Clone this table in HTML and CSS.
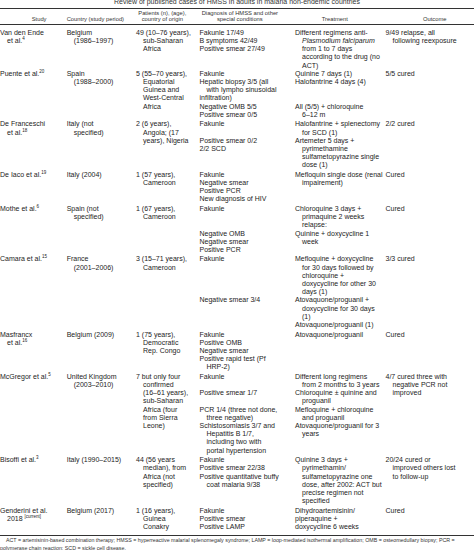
FILE: index.html
```html
<!DOCTYPE html>
<html>
<head>
<meta charset="utf-8">
<link rel="stylesheet" href="styles.css">
</head>
<body>
<div class="page">
  <div class="title">Review of published cases of HMSS in adults in malaria non-endemic countries</div>
  <div class="rule"></div>
  <div class="grid head">
    <div class="h h-study">Study</div>
    <div class="h h-country">Country (study period)</div>
    <div class="h h-pat"><span class="hc">Patients (n), (age),<br>country of origin</span></div>
    <div class="h h-diag"><span class="hc">Diagnosis of HMSS and other<br>special conditions</span></div>
    <div class="h h-treat">Treatment</div>
    <div class="h h-out">Outcome</div>
  </div>
  <div class="rule"></div>

  <div class="grid row first">
    <div class="c"><div class="it">Van den Ende<br>et al.<sup>4</sup></div></div>
    <div class="c"><div class="it">Belgium<br>(1986–1997)</div></div>
    <div class="c"><div class="it">49 (10–76 years),<br>sub-Saharan<br>Africa</div></div>
    <div class="c"><div class="it">Fakunle 17/49</div><div class="it">B symptoms 42/49</div><div class="it">Positive smear 27/49</div></div>
    <div class="c"><div class="it">Different regimens anti-<br><i>Plasmodium falciparum</i><br>from 1 to 7 days<br>according to the drug (no<br>ACT)</div></div>
    <div class="c"><div class="it">9/49 relapse, all<br>following reexposure</div></div>
  </div>

  <div class="grid row">
    <div class="c"><div class="it">Puente et al.<sup>20</sup></div></div>
    <div class="c"><div class="it">Spain<br>(1988–2000)</div></div>
    <div class="c"><div class="it">5 (55–70 years),<br>Equatorial<br>Guinea and<br>West-Central<br>Africa</div></div>
    <div class="c"><div class="it">Fakunle</div><div class="it">Hepatic biopsy 3/5 (all<br>with lympho sinusoidal</div><div class="it">infiltration)</div><div class="it">Negative OMB 5/5</div><div class="it">Positive smear 0/5</div></div>
    <div class="c"><div class="it">Quinine 7 days (1)</div><div class="it">Halofantrine 4 days (4)</div><div class="sp"></div><div class="sp"></div><div class="it">All (5/5) + chloroquine<br>6–12 m</div></div>
    <div class="c"><div class="it">5/5 cured</div></div>
  </div>

  <div class="grid row">
    <div class="c"><div class="it">De Franceschi<br>et al.<sup>18</sup></div></div>
    <div class="c"><div class="it">Italy (not<br>specified)</div></div>
    <div class="c"><div class="it">2 (6 years),<br>Angola; (17<br>years), Nigeria</div></div>
    <div class="c"><div class="it">Fakunle</div><div class="sp"></div><div class="it">Positive smear 0/2</div><div class="it">2/2 SCD</div></div>
    <div class="c"><div class="it">Halofantrine + splenectomy<br>for SCD (1)</div><div class="it">Artemeter 5 days +<br>pyrimethamine<br>sulfametopyrazine single<br>dose (1)</div></div>
    <div class="c"><div class="it">2/2 cured</div></div>
  </div>

  <div class="grid row">
    <div class="c"><div class="it">De Iaco et al.<sup>19</sup></div></div>
    <div class="c"><div class="it">Italy (2004)</div></div>
    <div class="c"><div class="it">1 (57 years),<br>Cameroon</div></div>
    <div class="c"><div class="it">Fakunle</div><div class="it">Negative smear</div><div class="it">Positive PCR</div><div class="it">New diagnosis of HIV</div></div>
    <div class="c"><div class="it">Mefloquin single dose (renal<br>impairement)</div></div>
    <div class="c"><div class="it">Cured</div></div>
  </div>

  <div class="grid row">
    <div class="c"><div class="it">Mothe et al.<sup>6</sup></div></div>
    <div class="c"><div class="it">Spain (not<br>specified)</div></div>
    <div class="c"><div class="it">1 (67 years),<br>Cameroon</div></div>
    <div class="c"><div class="it">Fakunle</div><div class="sp"></div><div class="sp"></div><div class="it">Negative OMB</div><div class="it">Negative smear</div><div class="it">Positive PCR</div></div>
    <div class="c"><div class="it">Chloroquine 3 days +<br>primaquine 2 weeks<br>relapse:</div><div class="it">Quinine + doxycycline 1<br>week</div></div>
    <div class="c"><div class="it">Cured</div></div>
  </div>

  <div class="grid row">
    <div class="c"><div class="it">Camara et al.<sup>15</sup></div></div>
    <div class="c"><div class="it">France<br>(2001–2006)</div></div>
    <div class="c"><div class="it">3 (15–71 years),<br>Cameroon</div></div>
    <div class="c"><div class="it">Fakunle</div><div class="sp"></div><div class="sp"></div><div class="sp"></div><div class="sp"></div><div class="it">Negative smear 3/4</div></div>
    <div class="c"><div class="it">Mefloquine + doxycycline<br>for 30 days followed by<br>chloroquine +<br>doxycycline for other 30<br>days (1)</div><div class="it">Atovaquone/proguanil +<br>doxycycline for 30 days<br>(1)</div><div class="it">Atovaquone/proguanil (1)</div></div>
    <div class="c"><div class="it">3/3 cured</div></div>
  </div>

  <div class="grid row">
    <div class="c"><div class="it">Masfrancx<br>et al.<sup>16</sup></div></div>
    <div class="c"><div class="it">Belgium (2009)</div></div>
    <div class="c"><div class="it">1 (75 years),<br>Democratic<br>Rep. Congo</div></div>
    <div class="c"><div class="it">Fakunle</div><div class="it">Positive OMB</div><div class="it">Negative smear</div><div class="it">Positive rapid test (Pf<br>HRP-2)</div></div>
    <div class="c"><div class="it">Atovaquone/proguanil</div></div>
    <div class="c"><div class="it">Cured</div></div>
  </div>

  <div class="grid row">
    <div class="c"><div class="it">McGregor et al.<sup>5</sup></div></div>
    <div class="c"><div class="it">United Kingdom<br>(2003–2010)</div></div>
    <div class="c"><div class="it">7 but only four<br>confirmed<br>(16–61 years),<br>sub-Saharan<br>Africa (four<br>from Sierra<br>Leone)</div></div>
    <div class="c"><div class="it">Fakunle</div><div class="sp"></div><div class="it">Positive smear 1/7</div><div class="sp"></div><div class="it">PCR 1/4 (three not done,<br>three negative)</div><div class="it">Schistosomiasis 3/7 and<br>Hepatitis B 1/7,<br>including two with<br>portal hypertension</div></div>
    <div class="c"><div class="it">Different long regimens<br>from 2 months to 3 years</div><div class="it">Chloroquine ± quinine and<br>proguanil</div><div class="it">Mefloquine + chloroquine<br>and proguanil</div><div class="it">Atovaquone/proguanil for 3<br>years</div></div>
    <div class="c"><div class="it">4/7 cured three with<br>negative PCR not<br>improved</div></div>
  </div>

  <div class="grid row">
    <div class="c"><div class="it">Bisoffi et al.<sup>3</sup></div></div>
    <div class="c"><div class="it">Italy (1990–2015)</div></div>
    <div class="c"><div class="it">44 (56 years<br>median), from<br>Africa (not<br>specified)</div></div>
    <div class="c"><div class="it">Fakunle</div><div class="it">Positive smear 22/38</div><div class="it">Positive quantitative buffy<br>coat malaria 9/38</div></div>
    <div class="c"><div class="it">Quinine 3 days +<br>pyrimethamin/<br>sulfametopyrazine one<br>dose, after 2002: ACT but<br>precise regimen not<br>specified</div></div>
    <div class="c"><div class="it">20/24 cured or<br>improved others lost<br>to follow-up</div></div>
  </div>

  <div class="grid row">
    <div class="c"><div class="it">Genderini et al.<br>2018 <sup>[current]</sup></div></div>
    <div class="c"><div class="it">Belgium (2017)</div></div>
    <div class="c"><div class="it">1 (16 years),<br>Guinea<br>Conakry</div></div>
    <div class="c"><div class="it">Fakunle</div><div class="it">Positive smear</div><div class="it">Positive LAMP</div></div>
    <div class="c"><div class="it">Dihydroartemisinin/</div><div class="it">piperaquine +</div><div class="it">doxycycline 6 weeks</div></div>
    <div class="c"><div class="it">Cured</div></div>
  </div>

  <div class="rule bottom"></div>
  <div class="foot">ACT = artemisinin-based combination therapy; HMSS = hyperreactive malarial splenomegaly syndrome; LAMP = loop-mediated isothermal amplification; OMB = osteomedullary biopsy; PCR = polymerase chain reaction; SCD = sickle cell disease.</div>
</div>
</body>
</html>
```

FILE: styles.css
```css
html, body {
  margin: 0;
  padding: 0;
  background: #ffffff;
}
body {
  font-family: "Liberation Sans", Arial, sans-serif;
  color: #1c1c1c;
  width: 474px;
  height: 550px;
  overflow: hidden;
}
.page {
  width: 474px;
}
.title {
  font-size: 7px;
  line-height: 8px;
  text-align: center;
  margin-top: -2px;
  white-space: nowrap;
  color: #333;
}
.rule {
  height: 1px;
  background: #333;
}
.title + .rule {
  margin-top: 2px;
}
.grid {
  display: grid;
  grid-template-columns: 66.7px 69.3px 63.5px 95.5px 90.5px 88.5px;
}
.head {
  font-size: 5.8px;
  line-height: 6px;
  padding: 1.2px 0 1.6px;
  color: #333;
}
.h {
  align-self: end;
  white-space: nowrap;
}
.hc {
  display: inline-block;
  text-align: center;
}
.h-study { padding-left: 31.7px; }
.h-country { padding-left: 0; }
.h-pat { padding-left: 2.3px; }
.h-diag { padding-left: 2.2px; }
.h-treat { padding-left: 26.7px; }
.h-out { padding-left: 37.5px; }

.row {
  font-size: 7px;
  line-height: 8.2px;
  padding: 0 0 1.3px;
}
.row.first {
  padding-top: 4px;
  padding-bottom: 0;
}
.c {
  white-space: nowrap;
}
.it {
  padding-left: 7px;
  text-indent: -7px;
}
.sp {
  height: 8.2px;
}
sup {
  font-size: 4.5px;
  line-height: 0;
  vertical-align: 3px;
}
.rule.bottom {
  margin-top: 2px;
}
.foot {
  font-size: 5.3px;
  line-height: 8px;
  text-indent: 6px;
  padding-top: 0.5px;
  color: #333;
}
```
